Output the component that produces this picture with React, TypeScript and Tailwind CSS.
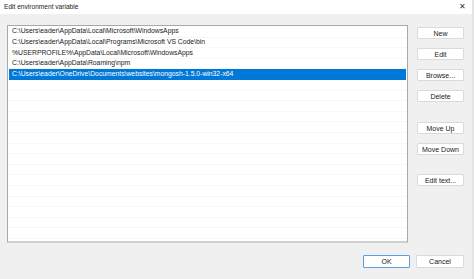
import React from "react";

const paths = [
  "C:\\Users\\eader\\AppData\\Local\\Microsoft\\WindowsApps",
  "C:\\Users\\eader\\AppData\\Local\\Programs\\Microsoft VS Code\\bin",
  "%USERPROFILE%\\AppData\\Local\\Microsoft\\WindowsApps",
  "C:\\Users\\eader\\AppData\\Roaming\\npm",
  "C:\\Users\\eader\\OneDrive\\Documents\\websites\\mongosh-1.5.0-win32-x64",
];

const selectedIndex = 4;

function DialogButton({ label, primary, className = "" }: { label: string; primary?: boolean; className?: string }) {
  return (
    <button
      className={`h-[12px] w-[47px] flex items-center justify-center bg-white text-[7px] leading-none text-[#1a1a1a] rounded-[1px] ${
        primary ? "border border-[#5a9fe0]" : "border border-[#dadada]"
      } ${className}`}
    >
      {label}
    </button>
  );
}

export default function App() {
  const rows = Array.from({ length: 20 }, (_, i) => paths[i] ?? "");

  return (
    <div
      className="w-[474px] h-[279px] flex flex-col bg-[#f0f0f0] overflow-hidden border-r-[2px] border-r-[#e4e4e4]"
      style={{ fontFamily: '"Liberation Sans", Arial, sans-serif' }}
    >
      {/* Title bar */}
      <div className="h-[14px] bg-white flex items-center justify-between pl-[4px] pr-[6px]">
        <span className="text-[6.6px] leading-none text-[#222]">Edit environment variable</span>
        <span className="text-[8px] leading-none text-[#333]">✕</span>
      </div>

      {/* Body */}
      <div className="flex pl-[7px] pt-[11px] gap-[9px]">
        <div className="w-[401px] h-[218px] bg-white border border-[#a8a8a8] border-b-[2px] border-b-[#cfcfcf] px-[1px] pt-[1px] overflow-hidden">
          {rows.map((p, i) => (
            <div
              key={i}
              className={`h-[10.6px] flex items-center pl-[3px] text-[6.8px] leading-none whitespace-nowrap border-b ${
                i === selectedIndex
                  ? "bg-[#0078d7] text-white border-[#0078d7]"
                  : "text-[#1a1a1a] border-[#f7f7f7]"
              }`}
            >
              {p}
            </div>
          ))}
        </div>

        <div className="flex flex-col pt-[2px]">
          <DialogButton label="New" />
          <DialogButton label="Edit" className="mt-[9px]" />
          <DialogButton label="Browse..." className="mt-[9px]" />
          <DialogButton label="Delete" className="mt-[9px]" />
          <DialogButton label="Move Up" className="mt-[20px]" />
          <DialogButton label="Move Down" className="mt-[9px]" />
          <DialogButton label="Edit text..." className="mt-[19px]" />
        </div>
      </div>

      {/* Footer */}
      <div className="flex justify-end gap-[6px] pr-[8px] pt-[12px]">
        <DialogButton label="OK" primary className="h-[13px]" />
        <DialogButton label="Cancel" className="h-[13px] w-[48px]" />
      </div>
    </div>
  );
}
